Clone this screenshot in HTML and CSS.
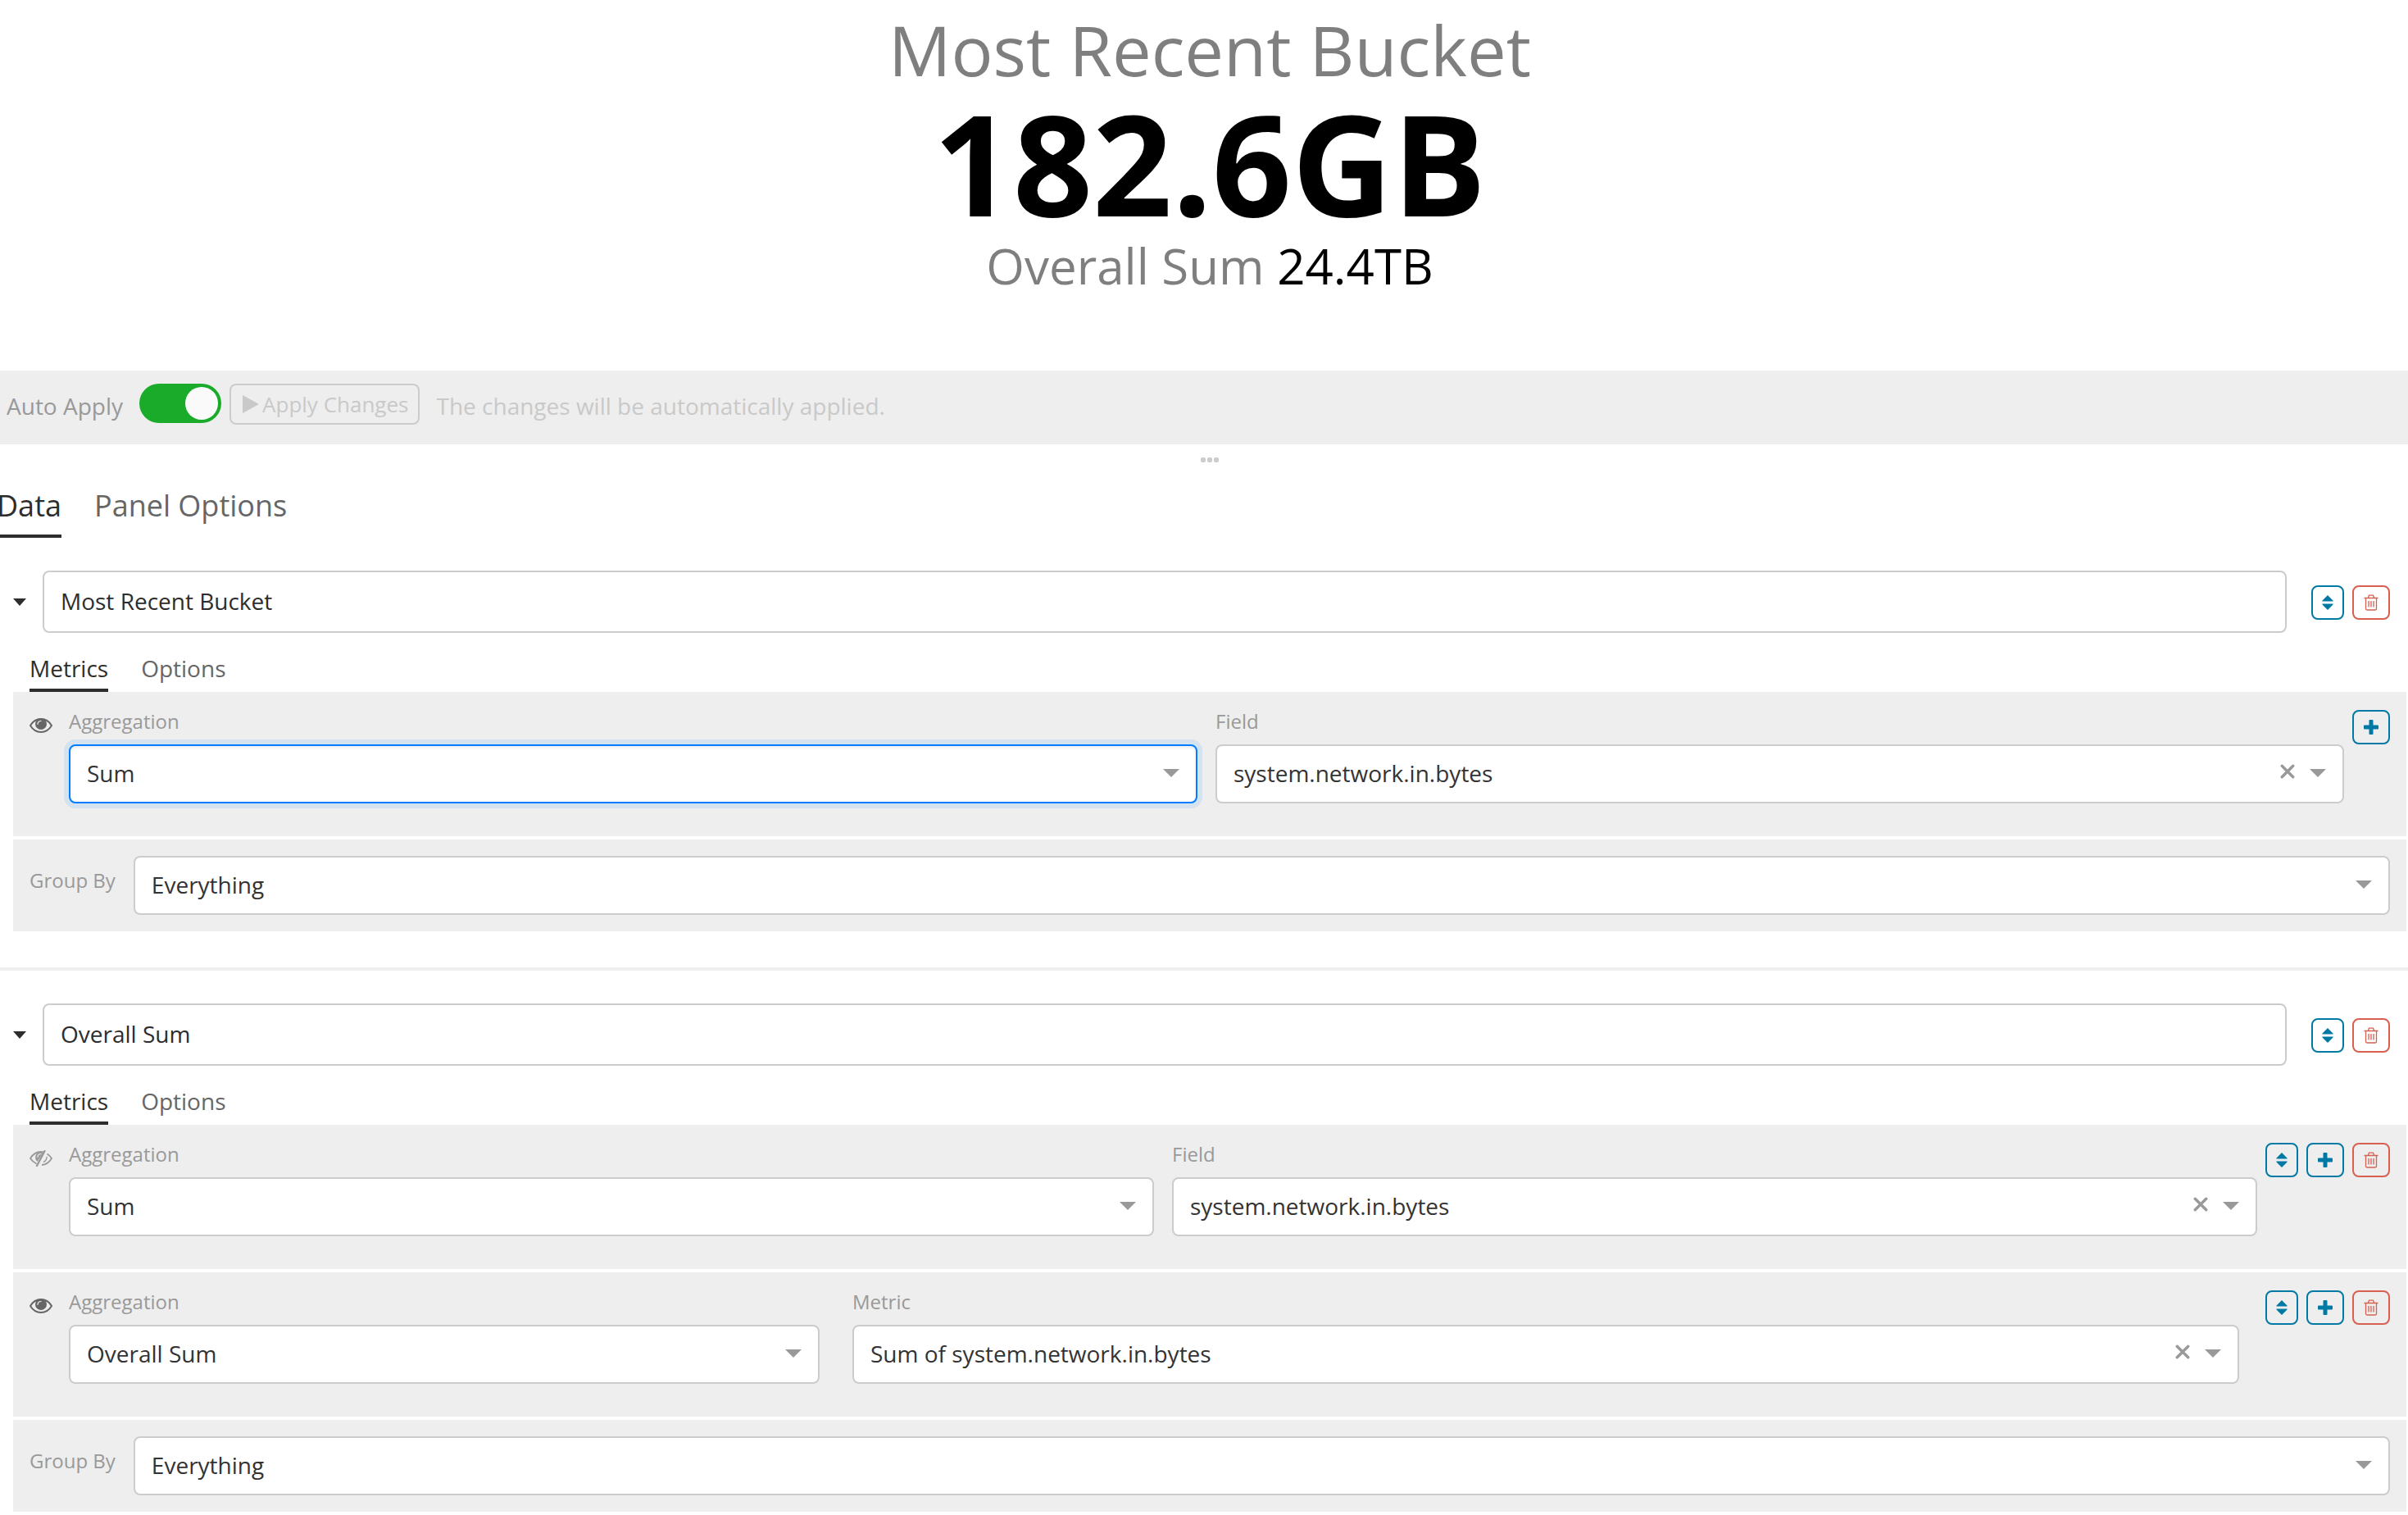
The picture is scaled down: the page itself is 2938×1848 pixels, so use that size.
FILE: index.html
```
<!DOCTYPE html>
<html lang="en">
<head>
    <meta charset="UTF-8">
    <meta name="viewport" content="width=device-width, initial-scale=1.0">
    <title>Metric Editor</title>
    <link rel="stylesheet" href="styles.css">
</head>
<body>
    <!-- Icon set -->
    <svg class="icon-set" aria-hidden="true">
        <symbol id="icon-eye" viewBox="0 0 28 20">
            <path d="M1 10C4 5 9 2 14 2s10 3 13 8c-3 5-8 8-13 8S4 15 1 10z" fill="none" stroke="currentColor" stroke-width="2"/>
            <circle cx="14" cy="8" r="7" fill="currentColor"/>
            <path d="M10 8.500c0-2.500 1.500-4 4-4" fill="none" stroke="#eee" stroke-width="1.200" stroke-linecap="round"/>
        </symbol>
        <symbol id="icon-eye-off" viewBox="0 0 28 20">
            <path d="M8.500 16.500C5.500 15 3 13 1 10c3-5 8-8 13-8 1 0 2 .1 3 .4M21.500 4.500C23.500 5.800 25.500 7.500 27 10c-3 5-7 7.600-12 8" fill="none" stroke="currentColor" stroke-width="1.800"/>
            <path d="M17 2.500 9.500 14A7 7 0 0 1 11 2.500z" fill="currentColor"/>
            <path d="M10 8.500c0-2.500 1.500-4 4-4" fill="none" stroke="#eee" stroke-width="1.200" stroke-linecap="round"/>
            <path d="M18.500 1 9 19" stroke="currentColor" stroke-width="2.400" stroke-linecap="round"/>
            <path d="M21 8c.2 3-1.500 5.500-4 6.500" fill="none" stroke="currentColor" stroke-width="1.400"/>
        </symbol>
        <symbol id="icon-sort" viewBox="0 0 14 18">
            <path d="M7 0 13.500 6.500V7.500H.5V6.500zM7 18 .5 11.500V10.500H13.500V11.500z" fill="currentColor"/>
        </symbol>
        <symbol id="icon-plus" viewBox="0 0 18 18">
            <path d="M7.500 0h3a1 1 0 0 1 1 1v5.500H17a1 1 0 0 1 1 1v3a1 1 0 0 1-1 1h-5.500V17a1 1 0 0 1-1 1h-3a1 1 0 0 1-1-1v-5.500H1a1 1 0 0 1-1-1v-3a1 1 0 0 1 1-1h5.500V1a1 1 0 0 1 1-1z" fill="currentColor"/>
        </symbol>
        <symbol id="icon-trash" viewBox="0 0 18 20">
            <path d="M.5 4.500h17M5.500 4 6.500 1.200h5L12.500 4M2.500 5v12.500a1.500 1.500 0 0 0 1.500 1.500h10a1.500 1.500 0 0 0 1.500-1.500V5M6 8v7.500M9 8v7.500M12 8v7.500" fill="none" stroke="currentColor" stroke-width="1.300"/>
        </symbol>
        <symbol id="icon-clear" viewBox="0 0 16 16">
            <path d="M2 2l12 12M14 2 2 14" stroke="currentColor" stroke-width="3" stroke-linecap="round"/>
        </symbol>
    </svg>

    <div class="metric">
        <div class="metric-label">Most Recent Bucket</div>
        <div class="metric-value">182.6GB</div>
        <div class="metric-secondary">Overall Sum <span>24.4TB</span></div>
    </div>

    <div class="apply-bar">
        <label for="autoApply">Auto Apply</label>
        <input type="checkbox" id="autoApply" class="toggle" checked>
        <button class="apply-button" disabled>Apply Changes</button>
        <span class="apply-message">The changes will be automatically applied.</span>
    </div>

    <div class="resize-handle"><i></i><i></i><i></i></div>

    <nav class="tabs main-tabs">
        <a href="#data" class="active">Data</a>
        <a href="#panel-options">Panel Options</a>
    </nav>

    <section class="series">
        <div class="series-header">
            <button class="collapse" aria-label="Collapse"></button>
            <input type="text" class="series-name" value="Most Recent Bucket" aria-label="Series label">
            <div class="actions">
                <button class="sort" aria-label="Sort"><svg><use href="#icon-sort"/></svg></button>
                <button class="delete" aria-label="Delete"><svg><use href="#icon-trash"/></svg></button>
            </div>
        </div>
        <nav class="tabs">
            <a href="#metrics" class="active">Metrics</a>
            <a href="#options">Options</a>
        </nav>
        <div class="agg-row">
            <button class="visibility" aria-label="Hide"><svg><use href="#icon-eye"/></svg></button>
            <div class="field">
                <label for="agg1">Aggregation</label>
                <div class="select focused">
                    <select id="agg1"><option>Sum</option></select>
                </div>
            </div>
            <div class="field">
                <label for="field1">Field</label>
                <div class="select">
                    <select id="field1"><option>system.network.in.bytes</option></select>
                    <button class="clear" aria-label="Clear"><svg><use href="#icon-clear"/></svg></button>
                </div>
            </div>
            <div class="actions">
                <button class="add" aria-label="Add"><svg><use href="#icon-plus"/></svg></button>
            </div>
        </div>
        <div class="group-row">
            <label for="group1">Group By</label>
            <div class="select">
                <select id="group1"><option>Everything</option></select>
            </div>
        </div>
    </section>

    <section class="series">
        <div class="series-header">
            <button class="collapse" aria-label="Collapse"></button>
            <input type="text" class="series-name" value="Overall Sum" aria-label="Series label">
            <div class="actions">
                <button class="sort" aria-label="Sort"><svg><use href="#icon-sort"/></svg></button>
                <button class="delete" aria-label="Delete"><svg><use href="#icon-trash"/></svg></button>
            </div>
        </div>
        <nav class="tabs">
            <a href="#metrics2" class="active">Metrics</a>
            <a href="#options2">Options</a>
        </nav>
        <div class="agg-row">
            <button class="visibility off" aria-label="Show"><svg><use href="#icon-eye-off"/></svg></button>
            <div class="field">
                <label for="agg2">Aggregation</label>
                <div class="select">
                    <select id="agg2"><option>Sum</option></select>
                </div>
            </div>
            <div class="field">
                <label for="field2">Field</label>
                <div class="select">
                    <select id="field2"><option>system.network.in.bytes</option></select>
                    <button class="clear" aria-label="Clear"><svg><use href="#icon-clear"/></svg></button>
                </div>
            </div>
            <div class="actions">
                <button class="sort" aria-label="Sort"><svg><use href="#icon-sort"/></svg></button>
                <button class="add" aria-label="Add"><svg><use href="#icon-plus"/></svg></button>
                <button class="delete" aria-label="Delete"><svg><use href="#icon-trash"/></svg></button>
            </div>
        </div>
        <div class="agg-row sibling">
            <button class="visibility" aria-label="Hide"><svg><use href="#icon-eye"/></svg></button>
            <div class="field">
                <label for="agg3">Aggregation</label>
                <div class="select">
                    <select id="agg3"><option>Overall Sum</option></select>
                </div>
            </div>
            <div class="field wide">
                <label for="metric3">Metric</label>
                <div class="select">
                    <select id="metric3"><option>Sum of system.network.in.bytes</option></select>
                    <button class="clear" aria-label="Clear"><svg><use href="#icon-clear"/></svg></button>
                </div>
            </div>
            <div class="actions">
                <button class="sort" aria-label="Sort"><svg><use href="#icon-sort"/></svg></button>
                <button class="add" aria-label="Add"><svg><use href="#icon-plus"/></svg></button>
                <button class="delete" aria-label="Delete"><svg><use href="#icon-trash"/></svg></button>
            </div>
        </div>
        <div class="group-row">
            <label for="group2">Group By</label>
            <div class="select">
                <select id="group2"><option>Everything</option></select>
            </div>
        </div>
    </section>
</body>
</html>
```
FILE: styles.css
```
* {
    box-sizing: border-box;
}
body {
    margin: 0;
    background-color: #fff;
    color: #2d2d2d;
    font-family: "Open Sans", sans-serif;
    font-size: 28px;
    line-height: 40px;
}
button, input, select {
    margin: 0;
    font-family: inherit;
    font-size: inherit;
    color: inherit;
}
button {
    padding: 0;
    border: none;
    background: none;
    cursor: pointer;
}
a {
    color: inherit;
    text-decoration: none;
}
.icon-set {
    display: none;
}

/* Metric preview */
.metric {
    padding: 4px 0 84px 14px;
    text-align: center;
}
.metric-label {
    font-size: 85px;
    line-height: 112px;
    color: #7f7f7f;
}
.metric-value {
    font-size: 170px;
    line-height: 164px;
    font-weight: 700;
    color: #000;
}
.metric-secondary {
    font-size: 60px;
    line-height: 88px;
    color: #7f7f7f;
}
.metric-secondary span {
    color: #000;
}

/* Auto apply bar */
.apply-bar {
    display: flex;
    align-items: flex-start;
    height: 90px;
    padding: 16px 8px;
    background-color: #eee;
    color: #999;
}
.apply-bar label {
    margin: 7px 20px 0 0;
}
.toggle {
    appearance: none;
    width: 100px;
    height: 48px;
    padding: 4px;
    border-radius: 24px;
    background-color: #ccc;
    cursor: pointer;
}
.toggle::before {
    content: "";
    display: block;
    width: 40px;
    height: 40px;
    border-radius: 50%;
    background-color: #fafafa;
}
.toggle:checked {
    background-color: #1bab2a;
}
.toggle:checked::before {
    margin-left: auto;
}
.apply-button {
    display: flex;
    align-items: center;
    gap: 4px;
    height: 50px;
    margin: 0 20px 0 10px;
    padding: 0 12px 0 14px;
    border: 2px solid #ccc;
    border-radius: 8px;
    font-size: 26px;
    line-height: 40px;
    color: #c9c9c9;
}
.apply-button::before {
    content: "";
    border-left: 20px solid #c9c9c9;
    border-top: 11px solid transparent;
    border-bottom: 11px solid transparent;
}
.apply-message {
    margin-top: 7px;
    color: #c9c9c9;
}
.resize-handle {
    display: flex;
    justify-content: center;
    gap: 2px;
    height: 42px;
    padding: 16px 0 0 14px;
}
.resize-handle i {
    width: 6px;
    height: 6px;
    border-radius: 2px;
    background-color: #ccc;
}

/* Tabs */
.tabs {
    display: flex;
    gap: 40px;
    padding-left: 36px;
    color: #666;
}
.tabs a {
    height: 50px;
    line-height: 42px;
    border-bottom: 4px solid transparent;
}
.tabs a.active {
    color: #2d2d2d;
    border-bottom-color: #2d2d2d;
}
.main-tabs {
    margin-left: -4px;
    padding-left: 0;
    font-size: 36px;
}
.main-tabs a {
    height: 72px;
    line-height: 66px;
}

/* Series */
.series {
    padding: 40px 0 44px;
}
.series + .series {
    padding-bottom: 4px;
    border-top: 4px solid #eee;
}
.series-header {
    display: flex;
    align-items: center;
    height: 76px;
    margin-bottom: 22px;
    padding: 0 22px 0 16px;
}
.collapse {
    margin-right: 20px;
    border-top: 9px solid #2d2d2d;
    border-left: 8px solid transparent;
    border-right: 8px solid transparent;
}
.series-name {
    flex: 1;
    height: 76px;
    padding: 0 20px 2px;
    border: 2px solid #ccc;
    border-radius: 8px;
}
.series-header .actions {
    margin: 2px 0 0 30px;
}

/* Aggregation rows */
.agg-row, .group-row {
    display: flex;
    margin: 0 2px 4px 16px;
    padding: 20px;
    background-color: #eee;
}
.agg-row {
    align-items: flex-start;
    padding: 16px 20px 40px;
}
.group-row {
    margin-bottom: 0;
}
.visibility {
    display: flex;
    width: 28px;
    margin: 15px 20px 0 0;
    color: #666;
}
.visibility.off {
    color: #999;
}
.visibility svg {
    width: 28px;
    height: 20px;
}
.field {
    flex: 1;
}
.field + .field {
    margin-left: 22px;
}
.sibling .field {
    flex: 916;
}
.sibling .wide {
    flex: 1692;
    margin: 0 22px 0 40px;
}
.agg-row label, .group-row label {
    display: block;
    font-size: 24px;
    line-height: 40px;
    color: #999;
}
.field label {
    margin-bottom: 8px;
}
.group-row label {
    margin: 10px 22px 0 0;
}
.group-row .select {
    flex: 1;
}

/* Selects */
.select {
    position: relative;
}
.select::after {
    content: "";
    position: absolute;
    top: 30px;
    right: 22px;
    border-top: 10px solid #999;
    border-left: 10px solid transparent;
    border-right: 10px solid transparent;
    pointer-events: none;
}
.select select {
    appearance: none;
    display: block;
    width: 100%;
    height: 72px;
    padding: 0 20px 2px;
    border: 2px solid #ccc;
    border-radius: 8px;
    background-color: #fff;
    color: #333;
}
.select.focused select {
    border-color: #007eff;
    box-shadow: inset 0 2px 4px rgba(0, 0, 0, 0.08), 0 0 0 6px rgba(0, 126, 255, 0.1);
}
.clear {
    position: absolute;
    top: 24px;
    right: 60px;
    display: flex;
    color: #999;
}
.clear svg {
    width: 18px;
    height: 18px;
}

/* Action buttons */
.actions {
    display: flex;
    gap: 10px;
    margin: 6px 0 0 10px;
}
.actions button {
    display: flex;
    align-items: center;
    justify-content: center;
    width: 46px;
    height: 42px;
    border: 2px solid #0079a5;
    border-radius: 8px;
    color: #0079a5;
}
.actions .sort {
    width: 40px;
}
.actions .delete {
    border-color: #d76051;
    color: #d76051;
}
.actions svg {
    width: 18px;
    height: 18px;
}
.actions .delete svg {
    height: 20px;
}
```
